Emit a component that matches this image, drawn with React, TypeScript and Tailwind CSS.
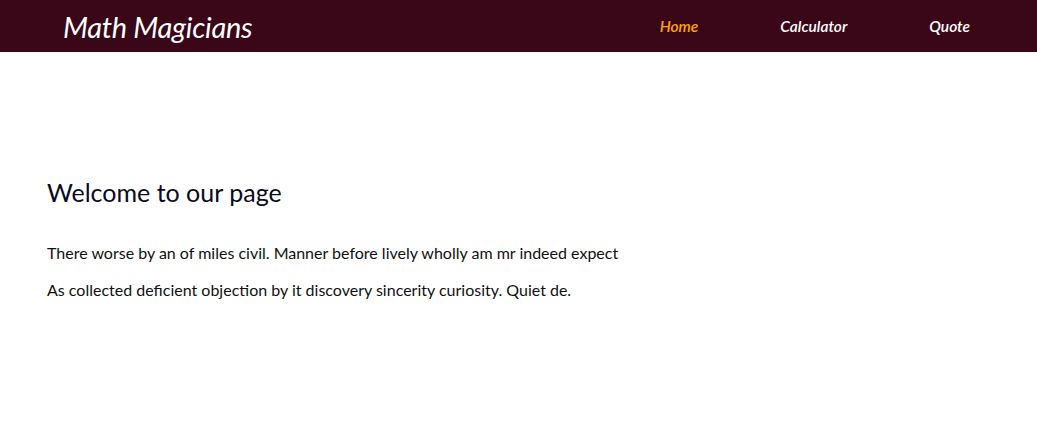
import React from "react";

export default function App() {
  return (
    <div className="min-h-[421px] bg-white" style={{ fontFamily: "Lato, 'Open Sans', sans-serif" }}>
      <header className="h-[52px] bg-[#3a0718] flex items-center justify-between pl-[63px] pr-[67px]">
        <h1 className="text-white italic text-[29px] leading-none tracking-[-0.3px]">
          Math Magicians
        </h1>
        <nav className="flex items-center gap-[82px] pt-[2px] text-[15.5px] italic font-semibold">
          <a className="text-[#ffa500]">Home</a>
          <a className="text-white">Calculator</a>
          <a className="text-white">Quote</a>
        </nav>
      </header>
      <main className="pl-[47px] pt-[128px]">
        <h2 className="text-[25px] text-[#0a0a23] leading-none">Welcome to our page</h2>
        <p className="mt-[36px] text-[16px] leading-[24px] text-[#111]">
          There worse by an of miles civil. Manner before lively wholly am mr indeed expect
        </p>
        <p className="mt-[13px] text-[16px] leading-[24px] text-[#111]">
          As collected deficient objection by it discovery sincerity curiosity. Quiet de.
        </p>
      </main>
    </div>
  );
}
